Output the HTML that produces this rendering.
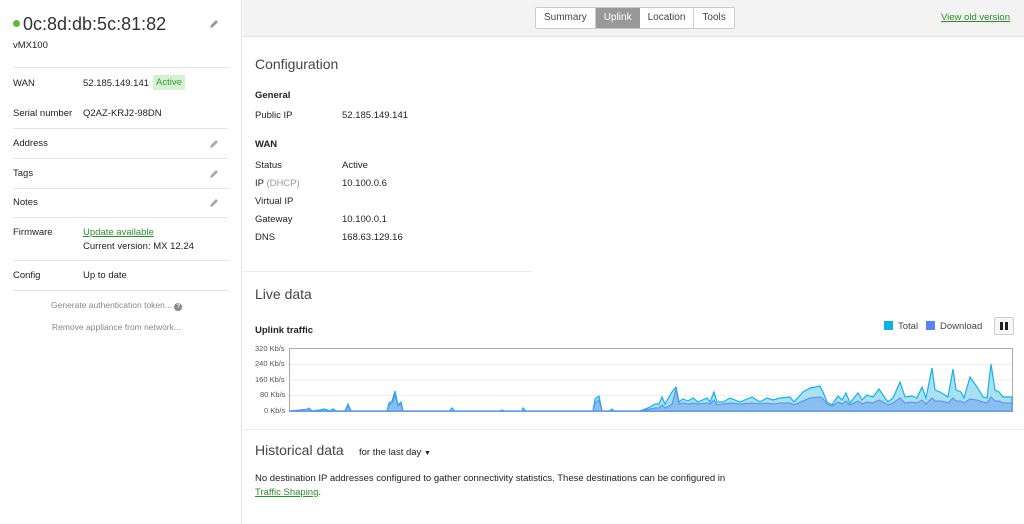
<!DOCTYPE html>
<html><head><meta charset="utf-8"><style>
*{margin:0;padding:0;box-sizing:border-box}
body{width:1024px;height:524px;overflow:hidden;background:#fff;font-family:"Liberation Sans",Arial,sans-serif;color:#222;font-size:9.5px;position:relative}
.a{position:absolute;white-space:nowrap}
.hl{position:absolute;height:1px;background:#e4e4e4}
.pen{position:absolute;width:10px;height:10px}
.g{color:#999}
a{color:#2e8b2e;text-decoration:underline}
</style></head><body>
<!-- left panel -->
<div class="a" style="left:0;top:0;width:242px;height:524px;background:#fff;border-right:1px solid #e2e2e2"></div>
<div class="a" style="left:13px;top:20px;width:7px;height:7px;border-radius:50%;background:#5cb83a"></div>
<div class="a" style="left:23px;top:14px;font-size:18px;color:#333">0c:8d:db:5c:81:82</div>
<div class="a" style="left:13px;top:40px">vMX100</div>
<svg class="pen" style="left:209px;top:19px" viewBox="0 0 10 10"><path d="M1 9 L2 6 L7 1 L9 3 L4 8 Z" fill="#999"/></svg>
<div class="hl" style="left:13px;top:67px;width:215px"></div>
<div class="a" style="left:13px;top:78px">WAN</div>
<div class="a" style="left:83px;top:78px">52.185.149.141</div>
<div class="a" style="left:153px;top:75px;padding:2px 3px;background:#d6f0d4;color:#3a9a3a">Active</div>
<div class="a" style="left:13px;top:108px">Serial number</div>
<div class="a" style="left:83px;top:108px">Q2AZ-KRJ2-98DN</div>
<div class="hl" style="left:13px;top:128px;width:215px"></div>
<div class="a" style="left:13px;top:138px">Address</div>
<svg class="pen" style="left:209px;top:139px" viewBox="0 0 10 10"><path d="M1 9 L2 6 L7 1 L9 3 L4 8 Z" fill="#aaa"/></svg>
<div class="hl" style="left:13px;top:158px;width:215px"></div>
<div class="a" style="left:13px;top:168px">Tags</div>
<svg class="pen" style="left:209px;top:169px" viewBox="0 0 10 10"><path d="M1 9 L2 6 L7 1 L9 3 L4 8 Z" fill="#aaa"/></svg>
<div class="hl" style="left:13px;top:188px;width:215px"></div>
<div class="a" style="left:13px;top:197px">Notes</div>
<svg class="pen" style="left:209px;top:198px" viewBox="0 0 10 10"><path d="M1 9 L2 6 L7 1 L9 3 L4 8 Z" fill="#aaa"/></svg>
<div class="hl" style="left:13px;top:217px;width:215px"></div>
<div class="a" style="left:13px;top:227px">Firmware</div>
<div class="a" style="left:83px;top:227px"><a>Update available</a></div>
<div class="a" style="left:83px;top:241px">Current version: MX 12.24</div>
<div class="hl" style="left:13px;top:260px;width:215px"></div>
<div class="a" style="left:13px;top:270px">Config</div>
<div class="a" style="left:83px;top:270px">Up to date</div>
<div class="hl" style="left:13px;top:290px;width:215px"></div>
<div class="a" style="left:51px;top:300px;font-size:8.5px;color:#888">Generate authentication token... <span style="display:inline-block;width:8px;height:8px;border-radius:50%;background:#888;color:#fff;font-size:6px;text-align:center;line-height:8px;font-weight:bold">?</span></div>
<div class="a" style="left:52px;top:322px;font-size:8.5px;color:#888">Remove appliance from network...</div>

<!-- top bar -->
<div class="a" style="left:243px;top:0;width:781px;height:37px;background:#f3f3f3;border-bottom:1px solid #e2e2e2"></div>
<div class="a" style="left:535px;top:7px;height:22px;border:1px solid #ccc;border-radius:2px;background:#fff;display:flex;font-size:10px;color:#444">
<div style="padding:0 8px;line-height:20px;border-right:1px solid #ccc">Summary</div>
<div style="padding:0 8px;line-height:20px;background:#999;color:#fff">Uplink</div>
<div style="padding:0 8px;line-height:20px;border-right:1px solid #ccc">Location</div>
<div style="padding:0 8px;line-height:20px">Tools</div>
</div>
<div class="a" style="left:941px;top:12px;font-size:9.5px"><a>View old version</a></div>

<!-- configuration -->
<div class="a" style="left:255px;top:56px;font-size:14px;color:#444">Configuration</div>
<div class="a" style="left:255px;top:90px;font-weight:bold">General</div>
<div class="a" style="left:255px;top:110px">Public IP</div>
<div class="a" style="left:342px;top:110px">52.185.149.141</div>
<div class="a" style="left:255px;top:139px;font-weight:bold">WAN</div>
<div class="a" style="left:255px;top:160px">Status</div><div class="a" style="left:342px;top:160px">Active</div>
<div class="a" style="left:255px;top:178px">IP <span class="g">(DHCP)</span></div><div class="a" style="left:342px;top:178px">10.100.0.6</div>
<div class="a" style="left:255px;top:196px">Virtual IP</div>
<div class="a" style="left:255px;top:214px">Gateway</div><div class="a" style="left:342px;top:214px">10.100.0.1</div>
<div class="a" style="left:255px;top:232px">DNS</div><div class="a" style="left:342px;top:232px">168.63.129.16</div>
<div class="hl" style="left:243px;top:271px;width:289px;background:#ececec"></div>

<!-- live data -->
<div class="a" style="left:255px;top:286px;font-size:14px;color:#444">Live data</div>
<div class="a" style="left:255px;top:325px;font-weight:bold">Uplink traffic</div>
<div class="a" style="left:884px;top:321px;width:9px;height:9px;background:#0fb0e0"></div>
<div class="a" style="left:898px;top:321px;font-size:9.5px;color:#444">Total</div>
<div class="a" style="left:926px;top:321px;width:9px;height:9px;background:#5b82f0"></div>
<div class="a" style="left:940px;top:321px;font-size:9.5px;color:#444">Download</div>
<div class="a" style="left:994px;top:317px;width:20px;height:18px;border:1px solid #ccc;border-radius:2px;background:#f6f6f6"></div>
<div class="a" style="left:1000px;top:322px;width:3px;height:8px;background:#222"></div>
<div class="a" style="left:1005px;top:322px;width:3px;height:8px;background:#222"></div>
<div class="a" style="left:255px;top:344px;font-size:7.5px;color:#555">320 Kb/s</div>
<div class="a" style="left:255px;top:359px;font-size:7.5px;color:#555">240 Kb/s</div>
<div class="a" style="left:255px;top:375px;font-size:7.5px;color:#555">160 Kb/s</div>
<div class="a" style="left:260px;top:390px;font-size:7.5px;color:#555">80 Kb/s</div>
<div class="a" style="left:264px;top:406px;font-size:7.5px;color:#555">0 Kb/s</div>
<svg class="a" style="left:0;top:0" width="1024" height="524">
<g stroke="#eee" stroke-width="1"><line x1="289" y1="364.5" x2="1012" y2="364.5"/><line x1="289" y1="380" x2="1012" y2="380"/><line x1="289" y1="395.5" x2="1012" y2="395.5"/></g>
<rect x="289.5" y="348.5" width="723" height="63" fill="none" stroke="#aaa"/>
<polygon fill="#a9e1f3" stroke="#17b2e2" stroke-width="1.2" points="289,411 305,411 309,408 312,411 320,410 324,409 330,411 333,409 336,411 345,411 348,404 351,411 387,411 389,403 392,401 395,391 398,405 401,402 403,411 450,411 452,408 455,411 500,411 502,410 504,411 522,411 523,408 526,411 593,411 595,399 599,396 602,411 609,411 612,409 614,411 640,411 650,407 655,404 659,404 662,397 665,404 672,392 676,387 679,402 683,399 688,401 693,398 698,402 707,398 710,402 714,392 717,402 723,402 730,398 740,402 752,397 760,402 767,398 773,400 780,398 790,397 794,402 803,392 810,388 820,386 823,392 827,402 832,405 838,396 842,400 846,393 850,403 858,393 862,400 867,395 873,397 879,389 885,398 888,402 893,398 900,382 905,397 912,396 917,398 922,387 926,398 932,368 935,390 940,392 945,395 948,397 953,369 956,390 961,392 964,398 970,377 977,387 983,397 987,398 991,364 995,390 999,392 1003,397 1012,397 1012,411"/>
<polygon fill="#86bff0" stroke="#5d8ceb" stroke-width="1" points="289,411 309,409 312,411 345,411 348,406 351,411 387,411 389,405 392,403 395,395 398,406 401,404 403,411 593,411 595,403 599,400 602,411 640,411 650,409 655,408 659,408 662,405 665,408 672,404 676,389 679,404 683,403 688,404 693,403 698,404 707,403 710,404 714,400 717,405 723,404 730,403 740,404 752,403 760,404 767,403 773,404 780,403 790,403 794,405 803,401 810,398 820,397 823,399 827,404 832,406 838,402 842,404 846,401 850,405 858,401 862,404 867,402 873,403 879,400 885,403 888,405 893,403 900,398 905,403 912,402 917,403 922,400 926,404 932,398 935,401 940,401 945,402 948,403 953,398 956,401 961,401 964,403 970,399 977,400 983,402 987,403 991,397 995,401 999,401 1003,403 1012,403 1012,411"/>
</svg>
<div class="hl" style="left:243px;top:429px;width:781px;background:#ececec"></div>

<!-- historical -->
<div class="a" style="left:255px;top:442px;font-size:14px;color:#444">Historical data</div>
<div class="a" style="left:359px;top:447px;font-size:9.5px">for the last day <span style="font-size:7px">▼</span></div>
<div class="a" style="left:255px;top:473px">No destination IP addresses configured to gather connectivity statistics. These destinations can be configured in</div>
<div class="a" style="left:255px;top:487px"><a>Traffic Shaping</a>.</div>
</body></html>
